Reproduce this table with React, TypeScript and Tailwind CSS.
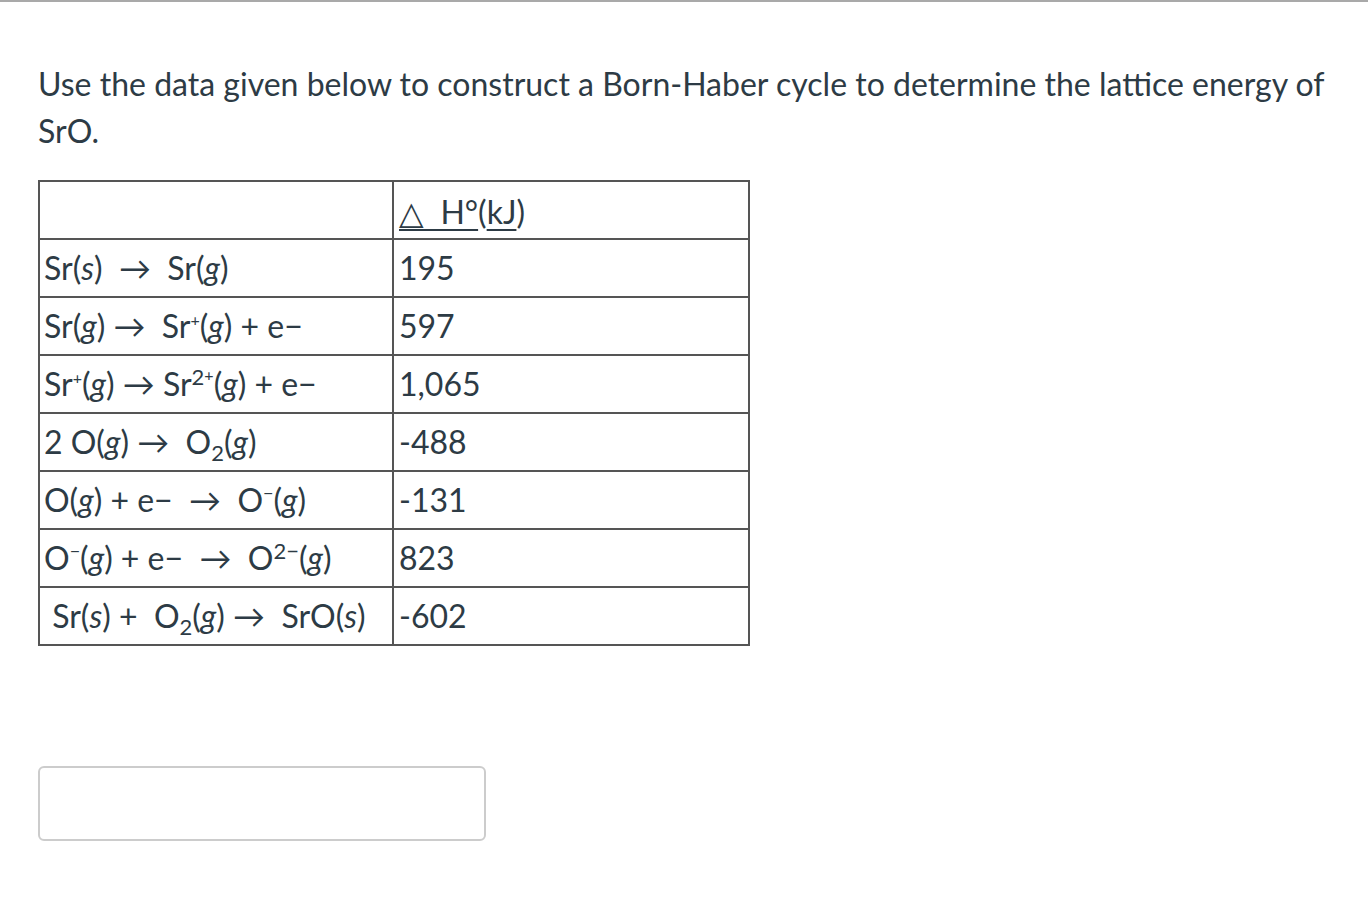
import React from "react";

const font = { fontFamily: "Lato, 'Open Sans', sans-serif" };

function G() {
  return <i>g</i>;
}
function S() {
  return <i>s</i>;
}

const plus = "align-[12px] text-[16px] leading-[0]";
const sub2 = "align-[-7px] text-[22px] leading-[0]";
const minus = "align-[13px] text-[18px] leading-[0]";
const sup2 = "align-[11px] text-[22px] leading-[0]";

const rows: [React.ReactNode, string][] = [
  [
    <>Sr(<S />) &nbsp;→ &nbsp;Sr(<G />)</>,
    "195",
  ],
  [
    <>Sr(<G />) → &nbsp;Sr<span className={plus}>+</span>(<G />) + e−</>,
    "597",
  ],
  [
    <>Sr<span className={plus}>+</span>(<G />) → Sr<span className={sup2}>2</span><span className="align-[15px] text-[16px] leading-[0]">+</span>(<G />) + e−</>,
    "1,065",
  ],
  [
    <>2 O(<G />) → &nbsp;O<span className={sub2}>2</span>(<G />)</>,
    "-488",
  ],
  [
    <>O(<G />) + e− &nbsp;→ &nbsp;O<span className={minus}>−</span>(<G />)</>,
    "-131",
  ],
  [
    <>O<span className={minus}>−</span>(<G />) + e− &nbsp;→ &nbsp;O<span className={sup2}>2−</span>(<G />)</>,
    "823",
  ],
  [
    <>&nbsp;Sr(<S />) + &nbsp;O<span className={sub2}>2</span>(<G />) → &nbsp;SrO(<S />)</>,
    "-602",
  ],
];

export default function App() {
  return (
    <div className="min-h-[902px] w-full bg-white text-[#2d3b45]" style={font}>
      <div className="h-[2px] w-full bg-[#a9a9a9]" />
      <div className="pl-[38px] pr-[20px] pt-[58px]">
        <p className="text-[32px] leading-[47px]">
          Use the data given below to construct a Born-Haber cycle to determine the lattice energy of SrO.
        </p>
        <table className="mt-[26px] border-collapse border-2 border-[#555] text-[32px]">
          <tbody>
            <tr className="h-[58px]">
              <td className="w-[354px] border-2 border-[#555] px-[4px]"></td>
              <td className="w-[356px] border-2 border-[#555] px-[5px] pt-[4px] leading-[34px] whitespace-nowrap">
                <span className="underline decoration-2 underline-offset-[5px]">△&nbsp;&nbsp;H°</span>(<span className="underline decoration-2 underline-offset-[5px]">kJ</span>)
              </td>
            </tr>
            {rows.map(([a, b], i) => (
              <tr key={i} className="h-[58px]">
                <td className="border-2 border-[#555] px-[4px] leading-[34px] whitespace-nowrap">{a}</td>
                <td className="border-2 border-[#555] px-[5px] leading-[34px]">{b}</td>
              </tr>
            ))}
          </tbody>
        </table>
        <div className="mt-[120px] h-[75px] w-[448px] rounded-[6px] border-2 border-[#cccccc] bg-white" />
      </div>
    </div>
  );
}
